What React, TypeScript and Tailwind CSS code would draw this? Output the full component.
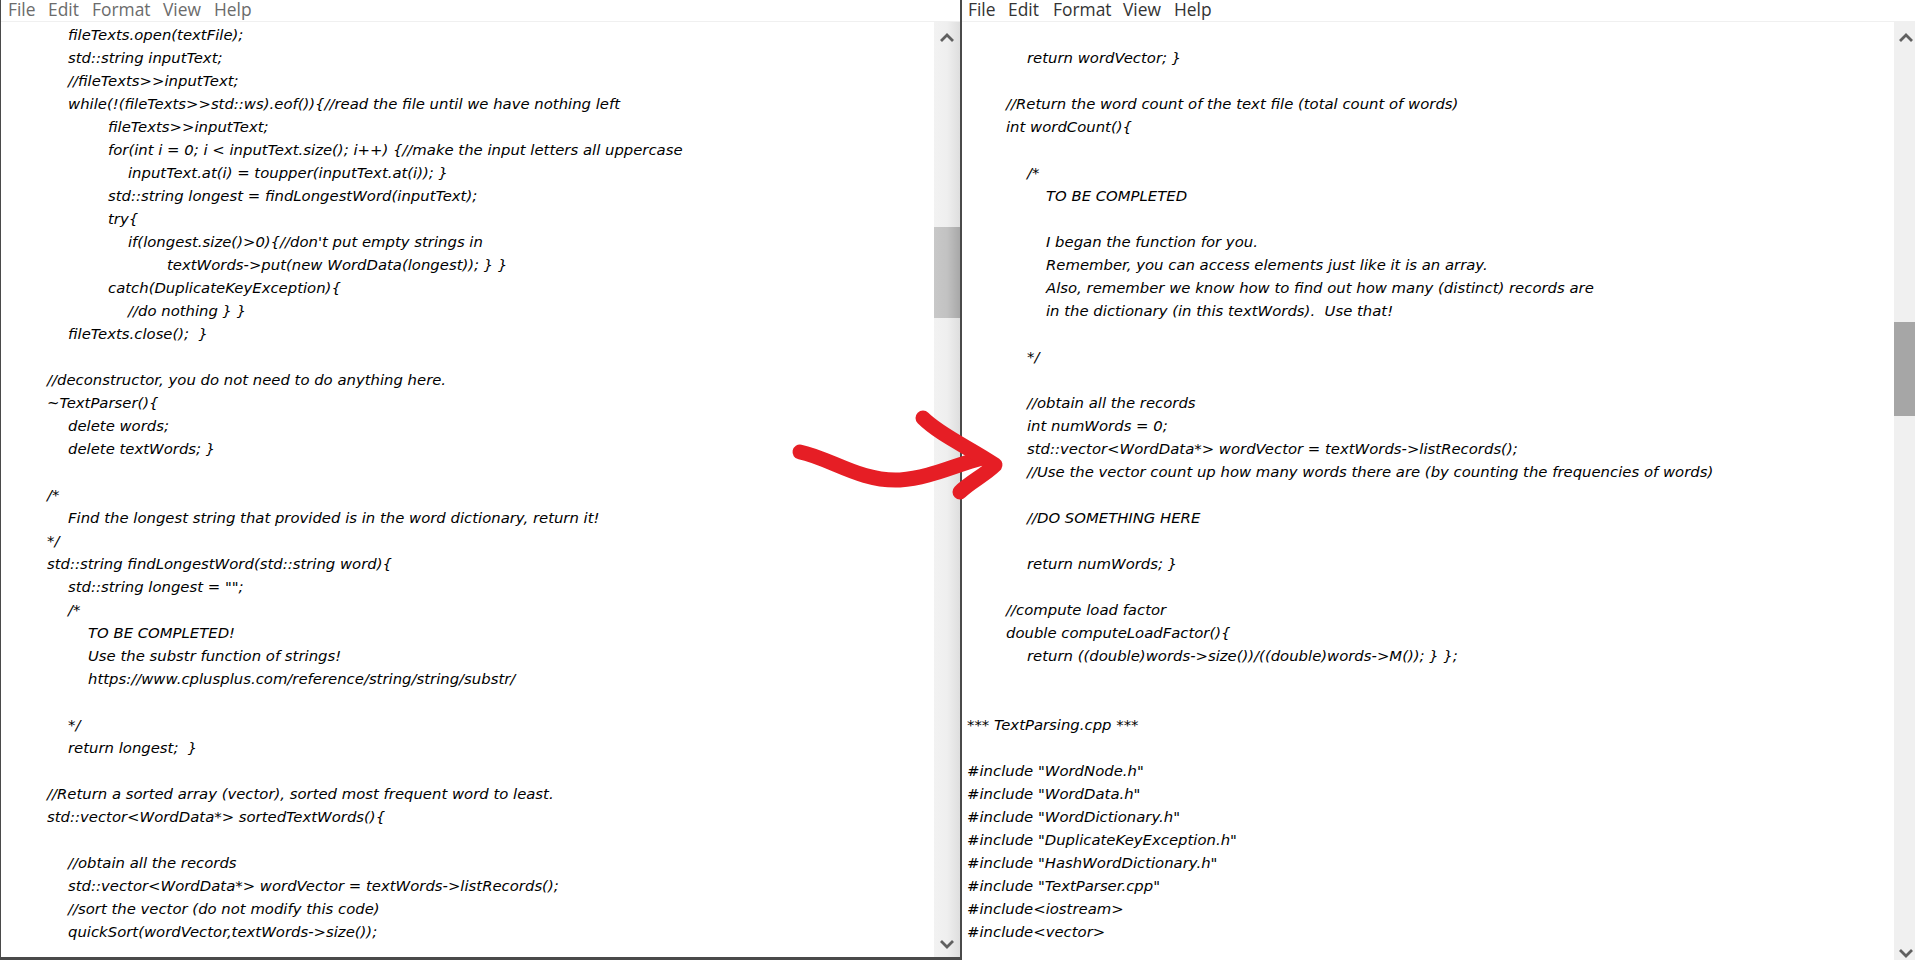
import React from "react";

type L = [number, string] | null;

const left: L[] = [
  [67, "fileTexts.open(textFile);"],
  [67, "std::string inputText;"],
  [67, "//fileTexts>>inputText;"],
  [67, "while(!(fileTexts>>std::ws).eof()){//read the file until we have nothing left"],
  [107, "fileTexts>>inputText;"],
  [107, "for(int i = 0; i < inputText.size(); i++) {//make the input letters all uppercase"],
  [127, "inputText.at(i) = toupper(inputText.at(i)); }"],
  [107, "std::string longest = findLongestWord(inputText);"],
  [107, "try{"],
  [127, "if(longest.size()>0){//don't put empty strings in"],
  [166, "textWords->put(new WordData(longest)); } }"],
  [107, "catch(DuplicateKeyException){"],
  [127, "//do nothing } }"],
  [67, "fileTexts.close();  }"],
  null,
  [46, "//deconstructor, you do not need to do anything here."],
  [46, "~TextParser(){"],
  [67, "delete words;"],
  [67, "delete textWords; }"],
  null,
  [46, "/*"],
  [67, "Find the longest string that provided is in the word dictionary, return it!"],
  [46, "*/"],
  [46, "std::string findLongestWord(std::string word){"],
  [67, "std::string longest = \"\";"],
  [67, "/*"],
  [87, "TO BE COMPLETED!"],
  [87, "Use the substr function of strings!"],
  [87, "https://www.cplusplus.com/reference/string/string/substr/"],
  null,
  [67, "*/"],
  [67, "return longest;  }"],
  null,
  [46, "//Return a sorted array (vector), sorted most frequent word to least."],
  [46, "std::vector<WordData*> sortedTextWords(){"],
  null,
  [67, "//obtain all the records"],
  [67, "std::vector<WordData*> wordVector = textWords->listRecords();"],
  [67, "//sort the vector (do not modify this code)"],
  [67, "quickSort(wordVector,textWords->size());"],
];

const right: L[] = [
  null,
  [65, "return wordVector; }"],
  null,
  [44, "//Return the word count of the text file (total count of words)"],
  [44, "int wordCount(){"],
  null,
  [65, "/*"],
  [84, "TO BE COMPLETED"],
  null,
  [84, "I began the function for you."],
  [84, "Remember, you can access elements just like it is an array."],
  [84, "Also, remember we know how to find out how many (distinct) records are"],
  [84, "in the dictionary (in this textWords).  Use that!"],
  null,
  [65, "*/"],
  null,
  [65, "//obtain all the records"],
  [65, "int numWords = 0;"],
  [65, "std::vector<WordData*> wordVector = textWords->listRecords();"],
  [65, "//Use the vector count up how many words there are (by counting the frequencies of words)"],
  null,
  [65, "//DO SOMETHING HERE"],
  null,
  [65, "return numWords; }"],
  null,
  [44, "//compute load factor"],
  [44, "double computeLoadFactor(){"],
  [65, "return ((double)words->size())/((double)words->M()); } };"],
  null,
  null,
  [5, "*** TextParsing.cpp ***"],
  null,
  [5, "#include \"WordNode.h\""],
  [5, "#include \"WordData.h\""],
  [5, "#include \"WordDictionary.h\""],
  [5, "#include \"DuplicateKeyException.h\""],
  [5, "#include \"HashWordDictionary.h\""],
  [5, "#include \"TextParser.cpp\""],
  [5, "#include<iostream>"],
  [5, "#include<vector>"],
];

function Chevron({ down }: { down?: boolean }) {
  return (
    <svg width="16" height="10" viewBox="0 0 16 10" className="shrink-0">
      <path
        d={down ? "M2 2 L8 8 L14 2" : "M2 8 L8 2 L14 8"}
        fill="none"
        stroke="#606060"
        strokeWidth="2.8"
      />
    </svg>
  );
}

function Menu({ items, className }: { items: [string, string][]; className: string }) {
  return (
    <div className={"flex h-[22px] shrink-0 items-start border-b border-[#f0f0f0] text-[17.4px] leading-[18px] font-['Open_Sans',sans-serif] " + className}>
      {items.map(([t, c]) => (
        <span key={t} className={c}>{t}</span>
      ))}
    </div>
  );
}

function Code({ lines }: { lines: L[] }) {
  return (
    <div className="min-w-0 flex-1 overflow-hidden pt-[2px] font-['DejaVu_Sans',sans-serif] text-[14.85px] leading-[23px] text-black italic">
      {lines.map((l, i) =>
        l ? (
          <div key={i} className="h-[23px] whitespace-pre" style={{ paddingLeft: l[0] }}>
            {l[1]}
          </div>
        ) : (
          <div key={i} className="h-[23px]" />
        )
      )}
    </div>
  );
}

function Scrollbar({ w, spacer, thumb, bottom }: { w: string; spacer: string; thumb: string; bottom: string }) {
  return (
    <div className={"flex shrink-0 flex-col items-center " + w}>
      <div className="flex h-[32px] shrink-0 items-center justify-center"><Chevron /></div>
      <div className={"shrink-0 " + spacer} />
      <div className={"w-full shrink-0 " + thumb} />
      <div className="flex-1" />
      <div className={"flex shrink-0 items-center justify-center " + bottom}><Chevron down /></div>
    </div>
  );
}

export default function App() {
  return (
    <div className="relative flex h-[960px] w-[1915px] overflow-hidden bg-white">
      <div className="flex h-full w-[960px] shrink-0 flex-col border-b-[3px] border-l-[1px] border-[#4a4a4a]">
        <Menu
          className="text-[#6b6b6b]"
          items={[
            ["File", "ml-[7px] w-[40px]"],
            ["Edit", "w-[44px]"],
            ["Format", "w-[71px]"],
            ["View", "w-[51px]"],
            ["Help", ""],
          ]}
        />
        <div className="flex min-h-0 flex-1">
          <Code lines={left} />
          <Scrollbar
            w="w-[26px] bg-linear-to-r from-[#f2f2f2] via-[#efefef] to-[#dedede]"
            spacer="h-[173px]"
            thumb="h-[91px] bg-linear-to-r from-[#c8c8c8] via-[#c2c2c2] to-[#a8a8a8]"
            bottom="h-[26px]"
          />
        </div>
      </div>
      <div className="flex h-full min-w-0 flex-1 flex-col overflow-hidden border-l-[2px] border-[#4a4a4a]">
        <Menu
          className="text-[#333]"
          items={[
            ["File", "ml-[6px] w-[40px]"],
            ["Edit", "w-[45px]"],
            ["Format", "w-[70px]"],
            ["View", "w-[51px]"],
            ["Help", ""],
          ]}
        />
        <div className="flex min-h-0 flex-1">
          <Code lines={right} />
          <Scrollbar
            w="mr-[-3px] w-[24px] bg-[#f0f0f0]"
            spacer="h-[268px]"
            thumb="h-[94px] bg-[#a6a6a6]"
            bottom="h-[14px]"
          />
        </div>
      </div>
      <svg className="pointer-events-none absolute left-[770px] top-[390px]" width="260" height="130" viewBox="0 0 260 130">
        <path d="M30 62 C60 68 90 92 130 90 C160 88 185 75 212 68" fill="none" stroke="#e61e25" strokeWidth="15" strokeLinecap="round" />
        <path d="M153 28 C170 45 200 58 225 75 C215 85 200 92 190 102" fill="none" stroke="#e61e25" strokeWidth="15" strokeLinecap="round" strokeLinejoin="round" />
      </svg>
    </div>
  );
}
